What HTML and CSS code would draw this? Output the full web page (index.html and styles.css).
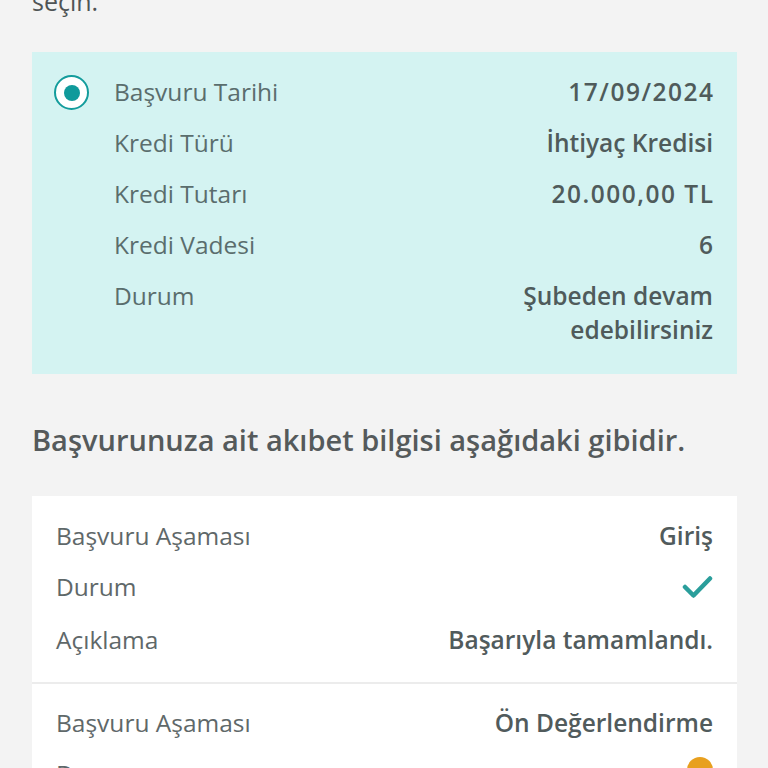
FILE: index.html
```html
<!DOCTYPE html>
<html lang="tr">
  <head>
    <meta charset="UTF-8" />
    <meta name="viewport" content="width=device-width, initial-scale=1.0" />
    <title>Başvuru Durumu</title>
    <link rel="stylesheet" href="styles.css">
  </head>
  <body>
    <div class="page">
      <p class="intro">Akıbetini öğrenmek istediğiniz başvurunuzu<br />seçin.</p>

      <div class="application">
        <span class="radio"><span class="radio-dot"></span></span>
        <div class="details">
          <div class="row">
            <span class="label">Başvuru Tarihi</span>
            <span class="value num">17/09/2024</span>
          </div>
          <div class="row">
            <span class="label">Kredi Türü</span>
            <span class="value">İhtiyaç Kredisi</span>
          </div>
          <div class="row">
            <span class="label">Kredi Tutarı</span>
            <span class="value num">20.000,00 TL</span>
          </div>
          <div class="row">
            <span class="label">Kredi Vadesi</span>
            <span class="value num">6</span>
          </div>
          <div class="row">
            <span class="label">Durum</span>
            <span class="value">Şubeden devam<br />edebilirsiniz</span>
          </div>
        </div>
      </div>

      <h2 class="section-title">Başvurunuza ait akıbet bilgisi aşağıdaki gibidir.</h2>

      <div class="stages">
        <div class="stage">
          <div class="row">
            <span class="label">Başvuru Aşaması</span>
            <span class="value">Giriş</span>
          </div>
          <div class="row">
            <span class="label">Durum</span>
            <span class="value">
              <svg class="check" width="32" height="26" viewBox="0 0 32 26">
                <path d="M4 13 L12.5 21.5 L29 4.5" fill="none" stroke="#2a9e9b" stroke-width="4.5" stroke-linecap="round" stroke-linejoin="round" />
              </svg>
            </span>
          </div>
          <div class="row">
            <span class="label">Açıklama</span>
            <span class="value">Başarıyla tamamlandı.</span>
          </div>
        </div>
        <div class="stage">
          <div class="row">
            <span class="label">Başvuru Aşaması</span>
            <span class="value">Ön Değerlendirme</span>
          </div>
          <div class="row">
            <span class="label">Durum</span>
            <span class="value"><span class="pending"></span></span>
          </div>
          <div class="row">
            <span class="label">Açıklama</span>
            <span class="value">Değerlendirme devam ediyor.</span>
          </div>
        </div>
      </div>
    </div>
  </body>
</html>
```

FILE: styles.css
```css
body {
  margin: 0;
  padding: 0;
  background-color: #f3f3f3;
  font-family: "Open Sans", Lato, sans-serif;
  color: #5a5e5f;
  overflow: hidden;
}
.page {
  padding: 0 31px 0 32px;
}
.intro {
  margin: -50px 0 0;
  font-size: 25px;
  line-height: 34px;
  color: #4f5455;
}
.application {
  margin-top: 34px;
  display: flex;
  align-items: flex-start;
  gap: 25px;
  padding: 23px 24px 27px 22px;
  background-color: #d4f3f2;
}
.radio {
  flex: none;
  width: 35px;
  height: 35px;
  border: 2px solid #139c9c;
  border-radius: 50%;
  background-color: #fff;
  display: flex;
  align-items: center;
  justify-content: center;
  box-sizing: border-box;
}
.radio-dot {
  width: 16px;
  height: 16px;
  border-radius: 50%;
  background-color: #109a9b;
}
.details {
  flex: 1;
  display: flex;
  flex-direction: column;
  gap: 17px;
}
.row {
  display: flex;
  justify-content: space-between;
  align-items: flex-start;
  font-size: 24.5px;
  line-height: 34px;
}
.label {
  color: #5f6869;
}
.value {
  text-align: right;
  font-weight: 600;
  color: #515b5c;
}
.num {
  letter-spacing: 1.5px;
  margin-right: -1.5px;
}
.application .label {
  color: #5a6d6d;
}
.application .value {
  color: #4f5b5b;
}
.section-title {
  margin: 49px 0 39px;
  font-size: 29px;
  line-height: 34px;
  font-weight: 600;
  color: #555a5b;
}
.stages {
  background-color: #fff;
}
.stage {
  display: flex;
  flex-direction: column;
  gap: 17px;
  padding: 23px 24px 25px;
  border-bottom: 2px solid #ececec;
}
.stage + .stage {
  padding-top: 22px;
}
.check {
  display: block;
  margin: 4px 0 6px;
}
.pending {
  display: inline-block;
  width: 26px;
  height: 26px;
  border-radius: 50%;
  background-color: #e8a01f;
}
```
